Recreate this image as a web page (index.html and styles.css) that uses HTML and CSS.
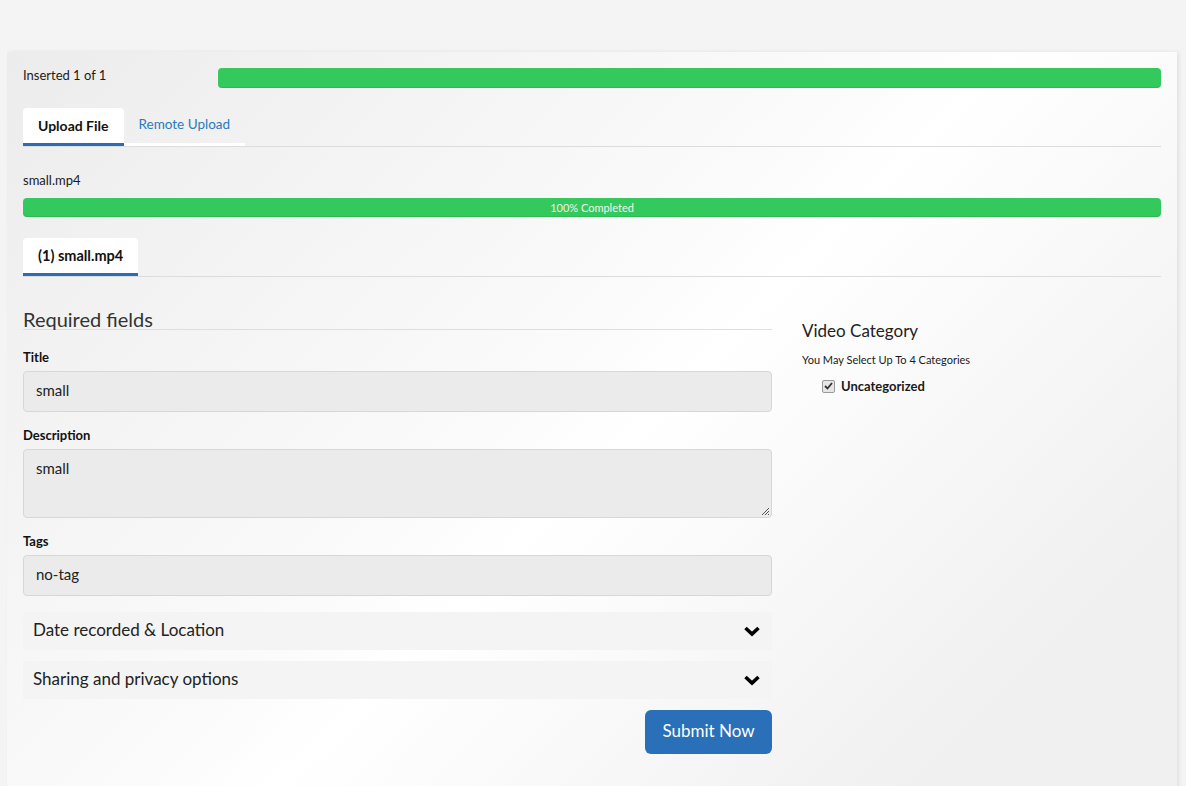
FILE: index.html
```html
<!DOCTYPE html>
<html>
<head>
<meta charset="utf-8">
<link rel="stylesheet" href="styles.css">
</head>
<body>
<div class="panel">
  <div class="status-row">
    <div class="status-label">Inserted 1 of 1</div>
    <div class="bar bar-top"></div>
  </div>

  <div class="tabs">
    <div class="tab active">Upload File</div>
    <div class="tab link">Remote Upload</div>
  </div>

  <div class="file-name">small.mp4</div>
  <div class="bar bar-file">100% Completed</div>

  <div class="tabs tabs2">
    <div class="tab active tab-file">(1) small.mp4</div>
  </div>

  <div class="columns">
    <div class="col-main">
      <div class="legend">Required fields</div>
      <label class="lbl">Title</label>
      <div class="input">small</div>
      <label class="lbl">Description</label>
      <div class="input textarea">small
        <svg class="grip" width="10" height="10" viewBox="0 0 10 10"><path d="M9 2 L2 9 M9 5 L5 9 M9 8 L8 9" stroke="#555" stroke-width="1" fill="none"/></svg>
      </div>
      <label class="lbl">Tags</label>
      <div class="input last">no-tag</div>

      <div class="collapse">
        <span class="collapse-text">Date recorded &amp; Location</span>
        <svg class="chev" width="18" height="12" viewBox="0 0 18 12"><path d="M2.5 3 L9 9 L15.5 3" stroke="#000" stroke-width="3.6" fill="none" stroke-linejoin="miter"/></svg>
      </div>
      <div class="collapse">
        <span class="collapse-text">Sharing and privacy options</span>
        <svg class="chev" width="18" height="12" viewBox="0 0 18 12"><path d="M2.5 3 L9 9 L15.5 3" stroke="#000" stroke-width="3.6" fill="none" stroke-linejoin="miter"/></svg>
      </div>
      <div class="actions">
        <button class="btn">Submit Now</button>
      </div>
    </div>
    <div class="col-side">
      <div class="side-title">Video Category</div>
      <div class="side-note">You May Select Up To 4 Categories</div>
      <div class="check-row">
        <span class="checkbox"><svg width="9" height="8" viewBox="0 0 9 8"><path d="M1 4 L3.5 6.5 L8 1" stroke="#333" stroke-width="1.8" fill="none"/></svg></span>
        <span class="check-label">Uncategorized</span>
      </div>
    </div>
  </div>
</div>
</body>
</html>
```

FILE: styles.css
```css
html, body {
  margin: 0;
  padding: 0;
}
body {
  background: #f4f4f4;
  font-family: "Lato", "Liberation Sans", sans-serif;
  color: #1a1a1a;
  height: 786px;
  overflow: hidden;
}
.panel {
  margin: 52px 0 0 7px;
  width: 1170px;
  box-sizing: border-box;
  padding: 16px 16px 30px 16px;
  background: linear-gradient(135deg, #ececec 0%, #fbfbfb 45%, #ffffff 52%, #f0f0f0 85%, #f0f0f0 100%);
  box-shadow: 2px 0 4px rgba(0,0,0,0.08);
  min-height: 760px;
}
.status-row {
  display: flex;
  align-items: flex-start;
  height: 20px;
}
.status-label {
  width: 195px;
  flex: none;
  font-size: 13px;
  line-height: 14px;
}
.bar {
  background: #34c95c;
  border-radius: 4px;
  height: 20px;
  box-shadow: inset 0 -1px 0 rgba(0,0,0,0.08);
}
.bar-top {
  flex: 1;
}
.tabs {
  display: flex;
  margin-top: 20px;
  border-bottom: 1px solid #dcdcdc;
  height: 38px;
}
.tab {
  padding: 0 15px;
  height: 38px;
  box-sizing: border-box;
  display: flex;
  align-items: center;
  font-size: 14px;
  border-radius: 4px 4px 0 0;
}
.tab.active {
  background: #fff;
  font-weight: 700;
  color: #111;
  border-bottom: 3px solid #2a6db5;
  padding-top: 0;
}
.tab.link {
  color: #2a7ac0;
  font-size: 13.5px;
  border-bottom: 3px solid #fff;
  padding-top: 0;
  padding-bottom: 3px;
}
.tab.tab-file {
  font-size: 14.5px;
}
.file-name {
  font-size: 13px;
  margin-top: 24px;
  height: 18px;
  line-height: 18px;
}
.bar-file {
  margin-top: 9px;
  color: #f2f2f2;
  font-size: 11px;
  text-align: center;
  line-height: 19px;
  height: 19px;
}
.tabs2 {
  margin-top: 21px;
}
.columns {
  display: flex;
  gap: 30px;
  margin-top: 33px;
}
.col-main {
  width: 749px;
  flex: none;
}
.col-side {
  flex: 1;
  padding-top: 10px;
}
.legend {
  font-size: 20px;
  color: #333;
  border-bottom: 1px solid #dedede;
  line-height: 19px;
  padding-bottom: 0;
  margin-bottom: 19px;
}
.lbl {
  display: block;
  font-size: 13px;
  font-weight: 700;
  color: #111;
  margin-bottom: 6px;
  line-height: 16px;
}
.input {
  background: #ebebeb;
  border: 1px solid #d7d7d7;
  border-radius: 4px;
  height: 41px;
  box-sizing: border-box;
  padding: 0 12px;
  font-size: 15px;
  line-height: 37px;
  color: #222;
  margin-bottom: 15px;
}
.input.last {
  margin-bottom: 16px;
}
.textarea {
  height: 69px;
  line-height: 20px;
  padding-top: 8px;
  position: relative;
}
.grip {
  position: absolute;
  right: 1px;
  bottom: 1px;
}
.collapse {
  background: #f4f4f4;
  height: 38px;
  display: flex;
  align-items: center;
  justify-content: space-between;
  padding: 0 10px;
  font-size: 17px;
  color: #222;
  margin-bottom: 11px;
}
.collapse-text {
  margin-top: -3px;
}
.chev {
  margin-right: 1px;
}
.actions {
  display: flex;
  justify-content: flex-end;
}
.btn {
  background: #2a70b8;
  color: #fff;
  border: none;
  border-radius: 6px;
  width: 127px;
  height: 44px;
  padding: 0 0 3px 0;
  font-family: inherit;
  font-size: 17px;
}
.side-title {
  font-size: 17px;
  color: #222;
  line-height: 22px;
}
.side-note {
  font-size: 11px;
  margin-top: 11px;
  line-height: 14px;
}
.check-row {
  display: flex;
  align-items: center;
  margin-top: 11px;
  padding-left: 20px;
}
.checkbox {
  width: 11px;
  height: 11px;
  border: 1px solid #9a9a9a;
  border-radius: 2px;
  background: #e6e6e6;
  display: flex;
  align-items: center;
  justify-content: center;
  margin-right: 6px;
}
.check-label {
  font-size: 13px;
  font-weight: 700;
}
```
